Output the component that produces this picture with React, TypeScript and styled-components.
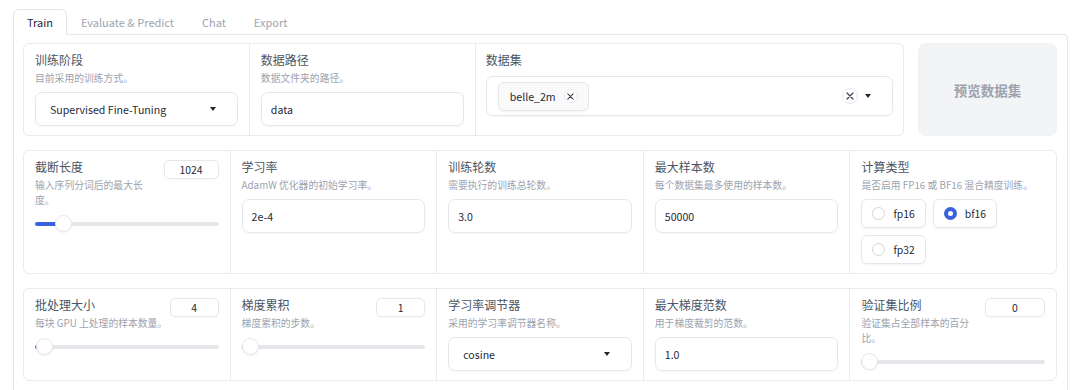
import * as React from 'react';
import styled, { createGlobalStyle } from 'styled-components';

const GlobalStyle = createGlobalStyle`
  body {
    margin: 0;
    background: #fff;
    font-family: "Noto Sans CJK SC", "Noto Sans", sans-serif;
    color: #1f2937;
  }
  * { box-sizing: border-box; }
`;

const Page = styled.div`
  padding: 9px 12px 0 13px;
`;

const TabBar = styled.div`
  display: flex;
  height: 26px;
  margin-bottom: -1px;
  position: relative;
  z-index: 1;
`;

const Tab = styled.div<{ $active?: boolean }>`
  padding: 0 13px;
  font-size: 11px;
  line-height: 24px;
  color: ${p => (p.$active ? '#1f2937' : '#9ca3af')};
  background: ${p => (p.$active ? '#fff' : 'transparent')};
  border: 1px solid ${p => (p.$active ? '#e5e7eb' : 'transparent')};
  border-bottom-color: ${p => (p.$active ? '#fff' : 'transparent')};
  border-radius: 6px 6px 0 0;
`;

const Panel = styled.div`
  border: 1px solid #e5e7eb;
  border-radius: 0 4px 4px 4px;
  padding: 8px 10px 12px 9px;
  display: flex;
  flex-direction: column;
  gap: 14px;
  min-height: 360px;
`;

const TopRow = styled.div`
  display: flex;
  gap: 14px;
  align-items: stretch;
`;

const Form = styled.div<{ $cols: string }>`
  flex: 1;
  display: grid;
  grid-template-columns: ${p => p.$cols};
  gap: 1px;
  background: #e9eaee;
  border: 1px solid #e9eaee;
  border-radius: 6px;
  overflow: hidden;
`;

const Cell = styled.div<{ $padX?: number }>`
  background: #fff;
  padding: 8px ${p => p.$padX ?? 11}px 9px;
  display: flex;
  flex-direction: column;
  min-width: 0;
`;

const Label = styled.div`
  font-size: 12px;
  line-height: 16px;
  color: #4b5563;
`;

const Info = styled.div<{ $nowrap?: boolean }>`
  margin-top: 3px;
  font-size: 9.8px;
  line-height: 15px;
  color: #9ca3af;
  white-space: ${p => (p.$nowrap ? 'nowrap' : 'normal')};
`;

const Field = styled.div`
  margin-top: 6px;
  height: 34px;
  border: 1px solid #e5e7eb;
  border-radius: 7px;
  box-shadow: 0 1px 2px rgba(0, 0, 0, 0.04);
  display: flex;
  align-items: center;
  padding: 0 9px;
  font-size: 10.6px;
  color: #1f2937;
`;

const SelectField = styled(Field)`
  padding: 0 21px 0 14px;
  justify-content: space-between;
`;

const Caret = styled.span`
  width: 0;
  height: 0;
  border-left: 3.5px solid transparent;
  border-right: 3.5px solid transparent;
  border-top: 4px solid #1f2937;
`;

const MultiField = styled(Field)`
  margin-top: 8px;
  height: 40px;
  padding: 0 21px 0 11px;
  justify-content: space-between;
`;

const Chip = styled.div`
  height: 29px;
  display: flex;
  align-items: center;
  gap: 8px;
  padding: 0 10px 0 11px;
  border: 1px solid #e5e7eb;
  border-radius: 6px;
  background: #fafafa;
  box-shadow: 0 1px 2px rgba(0, 0, 0, 0.04);
  font-size: 10.6px;
`;

const ClearRound = styled.span<{ $size: number }>`
  width: ${p => p.$size}px;
  height: ${p => p.$size}px;
  border-radius: 50%;
  border: 1px solid #e5e7eb;
  background: #fff;
  display: flex;
  align-items: center;
  justify-content: center;
`;

const Tools = styled.div`
  display: flex;
  align-items: center;
  gap: 7px;
`;

const PreviewButton = styled.button`
  width: 139px;
  border: 1px solid #f0f1f3;
  border-radius: 8px;
  background: #f3f4f6;
  color: #9ca3af;
  font-family: inherit;
  font-size: 13.5px;
  font-weight: 700;
`;

const Head = styled.div`
  display: flex;
  justify-content: space-between;
  align-items: flex-start;
  gap: 6px;
`;

const HeadText = styled.div<{ $w?: number }>`
  flex: ${p => (p.$w ? 'none' : '1')};
  width: ${p => (p.$w ? `${p.$w}px` : 'auto')};
  min-width: 0;
`;

const NumberBox = styled.div<{ $w: number }>`
  flex: none;
  width: ${p => p.$w}px;
  height: 19px;
  margin-top: 1px;
  border: 1px solid #e5e7eb;
  border-radius: 5px;
  box-shadow: 0 1px 2px rgba(0, 0, 0, 0.03);
  font-size: 10.4px;
  line-height: 17px;
  text-align: center;
  color: #1f2937;
`;

const Track = styled.div`
  position: relative;
  margin-top: 7px;
  height: 17px;
  display: flex;
  align-items: center;

  &::before {
    content: '';
    position: absolute;
    left: 0;
    right: 0;
    height: 4px;
    border-radius: 2px;
    background: #e5e7eb;
  }
`;

const Fill = styled.div`
  position: absolute;
  left: 0;
  height: 4px;
  border-radius: 2px;
  background: #3a62e0;
`;

const Thumb = styled.div`
  position: absolute;
  width: 17px;
  height: 17px;
  border-radius: 50%;
  background: #fff;
  border: 1px solid #e5e7eb;
  box-shadow: 0 1px 2px rgba(0, 0, 0, 0.06);
`;

const RadioGroup = styled.div`
  margin-top: 6px;
  display: flex;
  flex-wrap: wrap;
  gap: 7px;
`;

const RadioItem = styled.div`
  height: 29px;
  display: flex;
  align-items: center;
  gap: 8px;
  padding: 0 10px 0 10px;
  border: 1px solid #e5e7eb;
  border-radius: 6px;
  box-shadow: 0 1px 2px rgba(0, 0, 0, 0.05);
  font-size: 10.4px;
`;

const Dot = styled.span<{ $on?: boolean }>`
  width: 13px;
  height: 13px;
  border-radius: 50%;
  background: #fff;
  border: ${p => (p.$on ? '4px solid #3a62e0' : '1px solid #d1d5db')};
`;

const Cross = ({ size }: { size: number }) => (
  <svg width={size} height={size} viewBox="0 0 10 10">
    <path d="M2 2L8 8M8 2L2 8" stroke="#374151" strokeWidth="1.2" strokeLinecap="round" />
  </svg>
);

interface SliderProps {
  label: string;
  info: string;
  value: string;
  ratio: number;
  boxWidth: number;
  textWidth?: number;
  nowrap?: boolean;
}

const SliderCell: React.FunctionComponent<SliderProps> = ({ label, info, value, ratio, boxWidth, textWidth, nowrap }) => (
  <Cell>
    <Head>
      <HeadText $w={textWidth}>
        <Label>{label}</Label>
        <Info $nowrap={nowrap}>{info}</Info>
      </HeadText>
      <NumberBox $w={boxWidth}>{value}</NumberBox>
    </Head>
    <Track>
      <Fill style={{ width: `calc(${ratio} * (100% - 17px) + 8px)` }} />
      <Thumb style={{ left: `calc(${ratio} * (100% - 17px))` }} />
    </Track>
  </Cell>
);

const TextCell = ({ label, info, value }: { label: string; info: string; value: string }) => (
  <Cell>
    <Label>{label}</Label>
    <Info>{info}</Info>
    <Field>{value}</Field>
  </Cell>
);

const SelectCell = ({ label, info, value }: { label: string; info: string; value: string }) => (
  <Cell>
    <Label>{label}</Label>
    <Info>{info}</Info>
    <SelectField>
      {value}
      <Caret />
    </SelectField>
  </Cell>
);

const App: React.FunctionComponent = () => (
  <Page>
    <GlobalStyle />
    <TabBar>
      <Tab $active>Train</Tab>
      <Tab>Evaluate &amp; Predict</Tab>
      <Tab>Chat</Tab>
      <Tab>Export</Tab>
    </TabBar>
    <Panel>
      <TopRow>
        <Form $cols="1fr 1fr 1.9fr">
          <SelectCell label="训练阶段" info="目前采用的训练方式。" value="Supervised Fine-Tuning" />
          <TextCell label="数据路径" info="数据文件夹的路径。" value="data" />
          <Cell $padX={10}>
            <Label>数据集</Label>
            <MultiField>
              <Chip>
                belle_2m
                <ClearRound $size={14}>
                  <Cross size={9} />
                </ClearRound>
              </Chip>
              <Tools>
                <ClearRound $size={16}>
                  <Cross size={10} />
                </ClearRound>
                <Caret />
              </Tools>
            </MultiField>
          </Cell>
        </Form>
        <PreviewButton>预览数据集</PreviewButton>
      </TopRow>

      <Form $cols="repeat(5, 1fr)">
        <SliderCell label="截断长度" info="输入序列分词后的最大长度。" value="1024" ratio={0.122} boxWidth={55} textWidth={116} />
        <TextCell label="学习率" info="AdamW 优化器的初始学习率。" value="2e-4" />
        <TextCell label="训练轮数" info="需要执行的训练总轮数。" value="3.0" />
        <TextCell label="最大样本数" info="每个数据集最多使用的样本数。" value="50000" />
        <Cell>
          <Label>计算类型</Label>
          <Info>是否启用 FP16 或 BF16 混合精度训练。</Info>
          <RadioGroup>
            <RadioItem>
              <Dot />
              fp16
            </RadioItem>
            <RadioItem>
              <Dot $on />
              bf16
            </RadioItem>
            <RadioItem>
              <Dot />
              fp32
            </RadioItem>
          </RadioGroup>
        </Cell>
      </Form>

      <Form $cols="repeat(5, 1fr)">
        <SliderCell label="批处理大小" info="每块 GPU 上处理的样本数量。" value="4" ratio={0.006} boxWidth={49} nowrap />
        <SliderCell label="梯度累积" info="梯度累积的步数。" value="1" ratio={0} boxWidth={49} />
        <SelectCell label="学习率调节器" info="采用的学习率调节器名称。" value="cosine" />
        <TextCell label="最大梯度范数" info="用于梯度裁剪的范数。" value="1.0" />
        <SliderCell label="验证集比例" info="验证集占全部样本的百分比。" value="0" ratio={0} boxWidth={60} textWidth={112} />
      </Form>
    </Panel>
  </Page>
);

export default App;
